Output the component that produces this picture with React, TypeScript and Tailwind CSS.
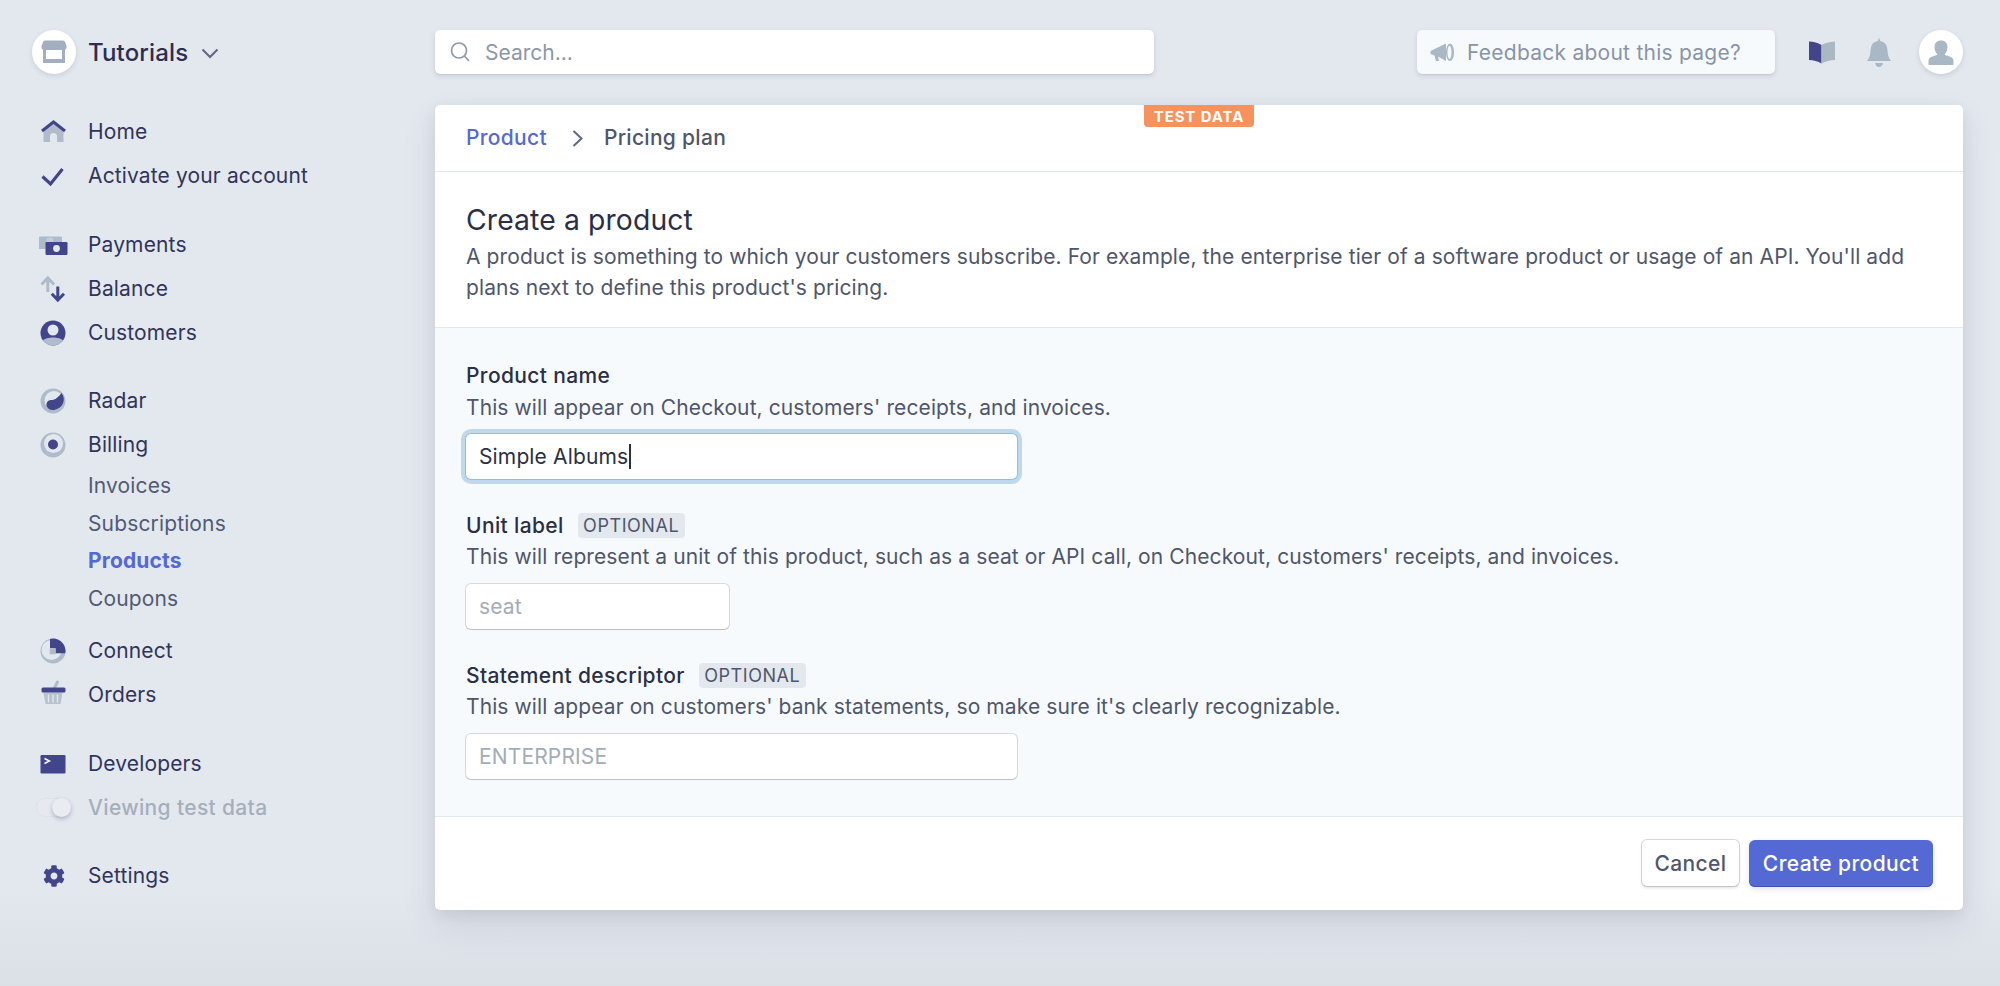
import React from "react";
import { FaCog } from "react-icons/fa";

const NAVY = "#43458b";
const GRAY = "#aab7c4";
const BG = "#e3e8ef";

const Svg = ({ children }: { children: React.ReactNode }) => (
  <svg width="32" height="32" viewBox="0 0 32 32" className="shrink-0 block">
    {children}
  </svg>
);

const HomeIcon = () => (
  <Svg>
    <path d="M6.5 13 L16.5 6 L26.5 13 V26 H20 V20.5 A3.5 3.5 0 0 0 13 20.5 V26 H6.5Z" fill="#b0bccb" />
    <path d="M5 15 L16.5 6 L28 15" fill="none" stroke={NAVY} strokeWidth="3" />
  </Svg>
);
const CheckIcon = () => (
  <Svg>
    <path d="M5.5 16.5 L13.5 24 L25.5 9" fill="none" stroke={NAVY} strokeWidth="3.2" />
  </Svg>
);
const PaymentsIcon = () => (
  <Svg>
    <path d="M2 8.5 A1 1 0 0 1 3 7.5 H24 A1 1 0 0 1 25 8.5 V20 H2Z" fill="#aebbca" />
    <circle cx="13" cy="12" r="3.5" fill="#c4ced9" />
    <rect x="8.5" y="13" width="22" height="13" rx="1.2" fill={NAVY} />
    <circle cx="19.5" cy="19.5" r="3.4" fill={BG} />
  </Svg>
);
const BalanceIcon = () => (
  <Svg>
    <path d="M10.8 19 V5 M4.5 11.5 L10.8 5 L17 11.5" fill="none" stroke="#aebbca" strokeWidth="3" />
    <path d="M20.8 13.5 V27 M14.8 20.7 L20.8 27 L27 20.7" fill="none" stroke={NAVY} strokeWidth="3" />
  </Svg>
);
const CustomersIcon = () => (
  <Svg>
    <circle cx="16" cy="16" r="12.5" fill={NAVY} />
    <circle cx="16" cy="13" r="5.5" fill={BG} />
    <path d="M6 23.5 C9 19.5 23 19.5 26 23.5 A12.5 12.5 0 0 1 6 23.5Z" fill="#b0bccb" />
  </Svg>
);
const RadarIcon = () => (
  <Svg>
    <circle cx="16" cy="16" r="12.5" fill="#aebbca" />
    <circle cx="17" cy="15.5" r="9.5" fill={BG} />
    <path d="M24.5 8 C27 11 27.5 15 26 18.5 C24 23 19 25.5 15 25 C11 24.5 9 21.5 9.5 19 C10 16 12 15 14 15 C17 15 19.5 14.5 24.5 8Z" fill={NAVY} />
  </Svg>
);
const BillingIcon = () => (
  <Svg>
    <circle cx="16" cy="16" r="12.5" fill="#aebbca" />
    <circle cx="16.5" cy="14.5" r="9.5" fill={BG} />
    <circle cx="16" cy="15.5" r="5" fill={NAVY} />
  </Svg>
);
const ConnectIcon = () => (
  <Svg>
    <circle cx="16" cy="16" r="12.5" fill="#aebbca" />
    <circle cx="14.5" cy="15" r="10" fill={BG} />
    <path d="M13 3.9 A12.5 12.5 0 0 1 28.5 16 Q28.5 17 28.2 18.3 H18.5 V13.3 H13Z" fill={NAVY} />
    <rect x="12.7" y="13.3" width="5.8" height="6" fill="#aebbca" />
  </Svg>
);
const OrdersIcon = () => (
  <Svg>
    <path d="M16 12 L20.5 3" stroke="#aebbca" strokeWidth="3" strokeLinecap="round" />
    <path d="M6.5 13.5 H25.5 L23.5 25 H8.5Z" fill="#b7c2cf" />
    <path d="M11.5 15.5 V23.5 M16 15.5 V23.5 M20.5 15.5 V23.5" stroke={BG} strokeWidth="1.4" />
    <rect x="4.5" y="8.5" width="24" height="5" rx="1.5" fill={NAVY} />
  </Svg>
);
const DevIcon = () => (
  <Svg>
    <rect x="3.5" y="7" width="25" height="18.5" rx="1.2" fill={NAVY} />
    <path d="M7.5 10.5 L12.5 13 L7.5 15.5" fill="none" stroke="#fff" strokeWidth="1.4" />
  </Svg>
);

const Row = ({ icon, label, className = "" }: { icon: React.ReactNode; label: string; className?: string }) => (
  <div className={`flex h-[44px] items-center pl-[37px] ${className}`}>
    <span className="w-[51px] shrink-0">{icon}</span>
    <span className="text-[21px] text-[#31345a]">{label}</span>
  </div>
);

const Sub = ({ label, active }: { label: string; active?: boolean }) => (
  <div className={`flex h-[37.5px] items-center pl-[88px] text-[21px] ${active ? "font-bold text-[#5469d4]" : "text-[#525a75]"}`}>
    {label}
  </div>
);

const Sidebar = () => (
  <aside className="w-[435px] shrink-0 pt-[30px]">
    <div className="flex h-[44px] items-center pl-[32px]">
      <span className="flex h-[44px] w-[44px] items-center justify-center rounded-full bg-white shadow-[0_2px_5px_rgba(50,50,93,0.14)]">
        <svg width="26" height="24" viewBox="0 0 26 24" className="block">
          <path d="M2 8 H24 V23 H2Z" fill="#a3afc0" />
          <rect x="5" y="10" width="16" height="9" fill="#fff" />
          <path d="M4 0.5 H22 Q23.5 0.5 24 2 L25.5 6 Q26 10 22.5 10 Q19.5 10.5 17.5 8.5 Q15.5 10.5 13 8.5 Q10.5 10.5 8.5 8.5 Q6.5 10.5 3.5 10 Q0 10 0.5 6 L2 2 Q2.5 0.5 4 0.5Z" fill="#a3afc0" />
        </svg>
      </span>
      <span className="ml-[12px] pt-[1px] text-[24px] font-medium text-[#2b2e52]">Tutorials</span>
      <svg width="18" height="11" viewBox="0 0 18 11" className="ml-[13px] mt-[3px] block">
        <path d="M1.5 1.5 L9 9 L16.5 1.5" fill="none" stroke="#5e6885" strokeWidth="2" />
      </svg>
    </div>
    <div className="mt-[36px]">
      <Row icon={<HomeIcon />} label="Home" />
      <Row icon={<CheckIcon />} label="Activate your account" />
    </div>
    <div className="mt-[24.5px]">
      <Row icon={<PaymentsIcon />} label="Payments" />
      <Row icon={<BalanceIcon />} label="Balance" />
      <Row icon={<CustomersIcon />} label="Customers" />
    </div>
    <div className="mt-[24.5px]">
      <Row icon={<RadarIcon />} label="Radar" />
      <Row icon={<BillingIcon />} label="Billing" />
      <Sub label="Invoices" />
      <Sub label="Subscriptions" />
      <Sub label="Products" active />
      <Sub label="Coupons" />
    </div>
    <div className="mt-[12px]">
      <Row icon={<ConnectIcon />} label="Connect" />
      <Row icon={<OrdersIcon />} label="Orders" />
    </div>
    <div className="mt-[24.5px]">
      <Row icon={<DevIcon />} label="Developers" />
      <div className="flex h-[44px] items-center pl-[36px]">
        <span className="relative mr-[17px] block h-[19px] w-[35px] rounded-full border border-[#dde2e9] bg-[#e6eaf0]">
          <span className="absolute right-[-1px] top-[-1px] h-[19px] w-[19px] rounded-full bg-[#e9ecf1] shadow-[0_2px_4px_rgba(50,50,93,0.3)]" />
        </span>
        <span className="text-[21px] font-medium tracking-[0.35px] text-[#a6aebc]">Viewing test data</span>
      </div>
    </div>
    <div className="mt-[24.5px] flex h-[44px] items-center pl-[43px]">
      <FaCog size={22} color={NAVY} className="mr-[23px] shrink-0" />
      <span className="text-[21px] text-[#31345a]">Settings</span>
    </div>
  </aside>
);

const Header = () => (
  <header className="flex h-[44px] items-center">
    <div className="flex h-[44px] w-[719px] items-center rounded-[5px] bg-white pl-[15px] shadow-[0_2px_5px_rgba(50,50,93,0.14),0_1px_1px_rgba(0,0,0,0.06)]">
      <svg width="21" height="20" viewBox="0 0 21 20" className="block">
        <circle cx="9" cy="8.5" r="7.5" fill="none" stroke="#8f9bad" strokeWidth="1.7" />
        <path d="M14.5 14 L19 19" stroke="#8f9bad" strokeWidth="1.7" />
      </svg>
      <span className="ml-[14px] pt-[1px] text-[21px] tracking-[0px] text-[#8d97a8]">Search...</span>
    </div>
    <div className="ml-[263px] flex h-[44px] w-[358px] items-center rounded-[5px] bg-[#f7fafc] pl-[13px] shadow-[0_2px_5px_rgba(50,50,93,0.14),0_1px_1px_rgba(0,0,0,0.06)]">
      <svg width="25" height="19" viewBox="0 0 25 19" className="block">
        <path d="M0.5 8 L16 0.5 V18 L8 13.5 L9 18 H6 L4.5 12.5 L0.5 11Z" fill={GRAY} />
        <ellipse cx="20" cy="9.3" rx="4" ry="8.8" fill={GRAY} />
        <ellipse cx="19.5" cy="9.3" rx="2" ry="6.6" fill="#f7fafc" />
      </svg>
      <span className="ml-[12px] pt-[1px] text-[21px] tracking-[0.25px] text-[#8a94a7]">Feedback about this page?</span>
    </div>
    <svg width="28" height="23" viewBox="0 0 28 23" className="ml-[33px] block">
      <path d="M13.5 4 Q8 0.5 1 0.5 V19 Q8 19 13.5 22.5Z" fill={NAVY} />
      <path d="M13.5 4 Q18 1 27 0.5 V19 Q20 19 13.5 22.5Z" fill={GRAY} />
    </svg>
    <svg width="24" height="30" viewBox="0 0 24 30" className="ml-[31px] block">
      <path d="M12 0.5 L13.2 4 Q20 5 20.5 13 Q20.5 20 24 24 H0 Q3.5 20 3.5 13 Q4 5 10.8 4Z" fill={GRAY} />
      <path d="M8 26 H16 Q15 30 12 30 Q9 30 8 26Z" fill={GRAY} />
    </svg>
    <span className="ml-[28px] flex h-[44px] w-[44px] items-center justify-center rounded-full bg-white shadow-[0_2px_5px_rgba(50,50,93,0.14)]">
      <svg width="26" height="25" viewBox="0 0 26 25" className="block">
        <path d="M13 0.5 C17 0.5 19.5 3 19.5 7 C19.5 10.5 18 13 16.5 14.5 C20 16.5 25.5 16.5 25.5 21 V25 H0.5 V21 C0.5 16.5 6 16.5 9.5 14.5 C8 13 6.5 10.5 6.5 7 C6.5 3 9 0.5 13 0.5Z" fill={GRAY} />
      </svg>
    </span>
  </header>
);

const Label = ({ children, optional }: { children: React.ReactNode; optional?: boolean }) => (
  <div className="flex h-[31.5px] items-center text-[21px] font-medium tracking-[0.36px] text-[#2a2f45]">
    {children}
    {optional && (
      <span className="ml-[14px] flex h-[25px] w-[107px] items-center justify-center rounded-[4px] bg-[#e3e8ee] text-[18px] font-normal tracking-[0.55px] text-[#4f566b]">
        OPTIONAL
      </span>
    )}
  </div>
);

const Help = ({ children }: { children: React.ReactNode }) => (
  <p className="text-[21px] leading-[31px] tracking-[0.1px] text-[#4f566b]">{children}</p>
);

const inputCls =
  "mt-[11.5px] block h-[45px] rounded-[5px] bg-white px-[13px] pt-[1px] text-[21px] text-[#2a2f45] shadow-[0_0_0_1px_rgba(60,66,87,0.18),0_1px_1px_rgba(0,0,0,0.12)] outline-none placeholder:text-[#a3acb9]";

const Card = () => (
  <main className="relative mt-[31px] w-[1528px] rounded-[5px] bg-white shadow-[0_15px_35px_rgba(50,50,93,0.1),0_5px_15px_rgba(0,0,0,0.07)]">
    <span className="absolute left-[709px] top-0 flex h-[22px] w-[110px] items-center justify-center rounded-b-[4px] bg-[#f5925e] pt-[2px] text-[15px] font-bold tracking-[0.9px] text-white">
      TEST DATA
    </span>
    <div className="flex h-[67px] items-center border-b border-[#e3e8ee] pl-[31px] text-[21px] tracking-[0.3px]">
      <span className="font-medium text-[#5469d4]">Product</span>
      <svg width="12" height="17" viewBox="0 0 12 17" className="ml-[25px] block">
        <path d="M1.5 1 L9.5 8.5 L1.5 16" fill="none" stroke="#5e6885" strokeWidth="2" />
      </svg>
      <span className="ml-[20px] font-medium text-[#4f566b]">Pricing plan</span>
    </div>
    <div className="border-b border-[#e3e8ee] px-[31px] pb-[24px] pt-[27px]">
      <h1 className="text-[28.3px] font-normal leading-[42px] text-[#2a2f45]">Create a product</h1>
      <Help>
        A product is something to which your customers subscribe. For example, the enterprise tier of a software product or usage of an API. You'll add plans next to define this product's pricing.
      </Help>
    </div>
    <div className="border-b border-[#e3e8ee] bg-[#f7fafc] pb-[37px] pl-[31px] pt-[32px]">
      <Label>Product name</Label>
      <Help>This will appear on Checkout, customers' receipts, and invoices.</Help>
      <div className="mt-[11.5px] flex h-[45px] w-[551px] items-center rounded-[5px] bg-white pl-[13px] text-[21px] text-[#2a2f45] shadow-[0_0_0_1px_rgba(58,151,212,0.36),0_0_0_5px_rgba(122,175,218,0.45)]">
        <span className="pt-[1px]">Simple Albums</span>
        <span className="ml-[1px] block h-[25px] w-[1.5px] bg-[#2a2f45]" />
      </div>
      <div className="mt-[30.5px]">
        <Label optional>Unit label</Label>
      </div>
      <Help>This will represent a unit of this product, such as a seat or API call, on Checkout, customers' receipts, and invoices.</Help>
      <input className={`${inputCls} w-[263px]`} placeholder="seat" />
      <div className="mt-[31px]">
        <Label optional>Statement descriptor</Label>
      </div>
      <Help>This will appear on customers' bank statements, so make sure it's clearly recognizable.</Help>
      <input className={`${inputCls} w-[551px]`} placeholder="ENTERPRISE" />
    </div>
    <div className="flex h-[93px] items-center justify-end gap-[10px] pr-[30px] text-[21px] font-medium tracking-[0.4px]">
      <button className="h-[46px] w-[97px] rounded-[5px] bg-white pt-[1px] text-[#4f566b] shadow-[0_0_0_1px_rgba(60,66,87,0.2),0_2px_3px_rgba(0,0,0,0.12)]">Cancel</button>
      <button className="h-[47px] w-[184px] rounded-[6px] bg-[#5469d4] pt-[1px] text-white shadow-[inset_0_-1px_0_#3f51b8,0_2px_5px_rgba(60,66,87,0.15)]">Create product</button>
    </div>
  </main>
);

export default function App() {
  return (
    <div
      className="flex h-[986px] overflow-hidden bg-[linear-gradient(to_bottom,#e3e8ef_90%,#dbe0e7_100%)] tracking-[0.14px]"
      style={{ fontFamily: "Inter, 'Noto Sans', sans-serif" }}
    >
      <Sidebar />
      <div className="pt-[30px]">
        <Header />
        <Card />
      </div>
    </div>
  );
}
